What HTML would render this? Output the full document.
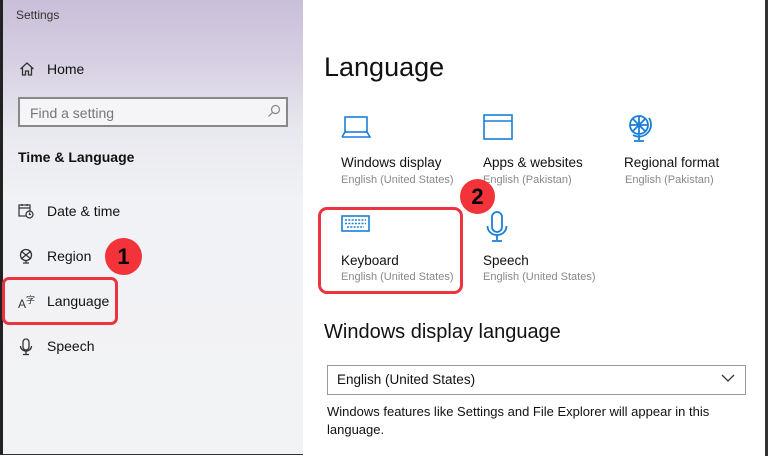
<!DOCTYPE html><html><head><style>
body{margin:0;width:768px;height:456px;overflow:hidden;font-family:"Liberation Sans",sans-serif;background:#fff;position:relative}
.a{position:absolute;white-space:nowrap}
#side{position:absolute;left:0;top:0;width:303px;height:455px;background:linear-gradient(180deg,#c9bfd9 0px,#d6cfe2 60px,#e8e8ef 130px,#f1f2f5 200px,#f2f3f5 456px);border-left:3px solid #222;box-sizing:border-box;border-bottom:1px solid #333}
.s{font-size:14px;color:#111}
.sub{font-size:11px;color:#888}
.t{font-size:13.5px;color:#111}
.badge{position:absolute;border-radius:50%;background:#f2333a;color:#000;font-weight:bold;font-size:22px;text-align:center}
</style></head><body>
<div id="side"></div>
<div style="position:absolute;right:0;top:0;width:3px;height:456px;background:#333"></div>
<div class="a" style="left:16px;top:8px;font-size:12px;color:#333">Settings</div>
<svg class="a" style="left:19px;top:61px" width="16" height="16" viewBox="0 0 16 16" fill="none" stroke="#333" stroke-width="1.3"><path d="M1.5 8L8 2l6.5 6M3.5 6.5V14h3v-4h3v4h3V6.5"/></svg>
<div class="a s" style="left:47px;top:61px">Home</div>
<div class="a" style="left:18px;top:97px;width:270px;height:30px;border:2px solid #888;box-sizing:border-box;background:#f5f5f7"></div>
<div class="a" style="left:30px;top:105px;font-size:14px;color:#777">Find a setting</div>
<svg class="a" style="left:267px;top:104px" width="14" height="14" viewBox="0 0 14 14" fill="none" stroke="#888" stroke-width="1.2"><circle cx="8.5" cy="5.5" r="4"/><path d="M5.5 8.5L1.5 12.5"/></svg>
<div class="a" style="left:18px;top:149px;font-size:14px;font-weight:bold;color:#111">Time &amp; Language</div>
<svg class="a" style="left:18px;top:203px" width="16" height="16" viewBox="0 0 16 16" fill="none" stroke="#333" stroke-width="1.2"><rect x="1" y="2" width="11" height="11"/><path d="M1 5h11M4 1v2M9 1v2"/><circle cx="11.5" cy="11.5" r="3.5" fill="#f1f2f5"/><path d="M11.5 9.5v2h1.5"/></svg>
<div class="a s" style="left:47px;top:203px">Date &amp; time</div>
<svg class="a" style="left:18px;top:248px" width="16" height="16" viewBox="0 0 16 16" fill="none" stroke="#333" stroke-width="1.3"><circle cx="8" cy="7" r="5.5"/><path d="M3 3l10 8M13 3L3 11M8 12.5V15M5 15h6"/></svg>
<div class="a s" style="left:47px;top:248px">Region</div>
<div class="a" style="left:18px;top:293px;font-size:12px;color:#333">A<sup style="font-size:9px">字</sup></div>
<div class="a s" style="left:47px;top:293px">Language</div>
<div class="a" style="left:2px;top:277px;width:116px;height:48px;border:3px solid #ee3340;border-radius:7px;box-sizing:border-box"></div>
<svg class="a" style="left:19px;top:338px" width="14" height="18" viewBox="0 0 14 18" fill="none" stroke="#333" stroke-width="1.3"><rect x="4" y="1" width="6" height="11" rx="3"/><path d="M1.5 8c0 3 2.5 5 5.5 5s5.5-2 5.5-5M7 13v3M4 16.5h6"/></svg>
<div class="a s" style="left:47px;top:338px">Speech</div>
<div class="badge" style="left:105px;top:238px;width:37px;height:37px;line-height:37px">1</div>

<div class="a" style="left:324px;top:52px;font-size:27px;color:#111">Language</div>
<svg class="a" style="left:341px;top:115px" width="30" height="24" viewBox="0 0 30 24" fill="none" stroke="#1a7fd8" stroke-width="1.6"><rect x="4" y="2" width="22" height="15"/><path d="M1 22h28l-3-5M1 22l3-5"/></svg>
<svg class="a" style="left:483px;top:114px" width="30" height="26" viewBox="0 0 30 26" fill="none" stroke="#1a7fd8" stroke-width="1.6"><rect x="1" y="1" width="28" height="24"/><path d="M1 7h28"/></svg>
<svg class="a" style="left:626px;top:113px" width="28" height="30" viewBox="0 0 28 30" fill="none" stroke="#1a7fd8" stroke-width="1.8"><circle cx="13" cy="12" r="9"/><path d="M6 5l14 14M20 5L6 19M13 3v18M4 12h18M23 5a12 12 0 0 1-16 17M13 22v5M8 28h10"/></svg>
<div class="a t" style="left:341px;top:155px">Windows display</div><div class="a sub" style="left:341px;top:174px">English (United States)</div>
<div class="a t" style="left:483px;top:155px">Apps &amp; websites</div><div class="a sub" style="left:483px;top:174px">English (Pakistan)</div>
<div class="a t" style="left:624px;top:155px">Regional format</div><div class="a sub" style="left:625px;top:174px">English (Pakistan)</div>
<svg class="a" style="left:341px;top:215px" width="29" height="18" viewBox="0 0 29 18" fill="none" stroke="#1a7fd8" stroke-width="1.6"><rect x="1" y="1" width="27" height="15"/><path d="M4 5h21M4 8.5h21M6 12h17" stroke-dasharray="2 1.3"/></svg>
<svg class="a" style="left:486px;top:211px" width="22" height="32" viewBox="0 0 22 32" fill="none" stroke="#1a7fd8" stroke-width="1.8"><rect x="6" y="1" width="10" height="20" rx="5"/><path d="M1.5 15c0 5 4 9 9.5 9s9.5-4 9.5-9M11 24v5M6 30h10"/></svg>
<div class="a t" style="left:341px;top:253px">Keyboard</div><div class="a sub" style="left:341px;top:271px">English (United States)</div>
<div class="a t" style="left:483px;top:253px">Speech</div><div class="a sub" style="left:483px;top:271px">English (United States)</div>
<div class="a" style="left:318px;top:207px;width:145px;height:87px;border:3px solid #ee3340;border-radius:9px;box-sizing:border-box"></div>
<div class="badge" style="left:460px;top:179px;width:35px;height:35px;line-height:35px">2</div>

<div class="a" style="left:324px;top:321px;font-size:20px;color:#111">Windows display language</div>
<div class="a" style="left:327px;top:365px;width:419px;height:30px;border:1px solid #999;box-sizing:border-box"></div>
<div class="a t" style="left:337px;top:372px">English (United States)</div>
<svg class="a" style="left:721px;top:374px" width="14" height="9" viewBox="0 0 14 9" fill="none" stroke="#333" stroke-width="1.3"><path d="M1 1l6 6 6-6"/></svg>
<div class="a" style="left:327px;top:403px;font-size:13px;color:#111;line-height:18px;white-space:normal;width:420px">Windows features like Settings and File Explorer will appear in this language.</div>
</body></html>
